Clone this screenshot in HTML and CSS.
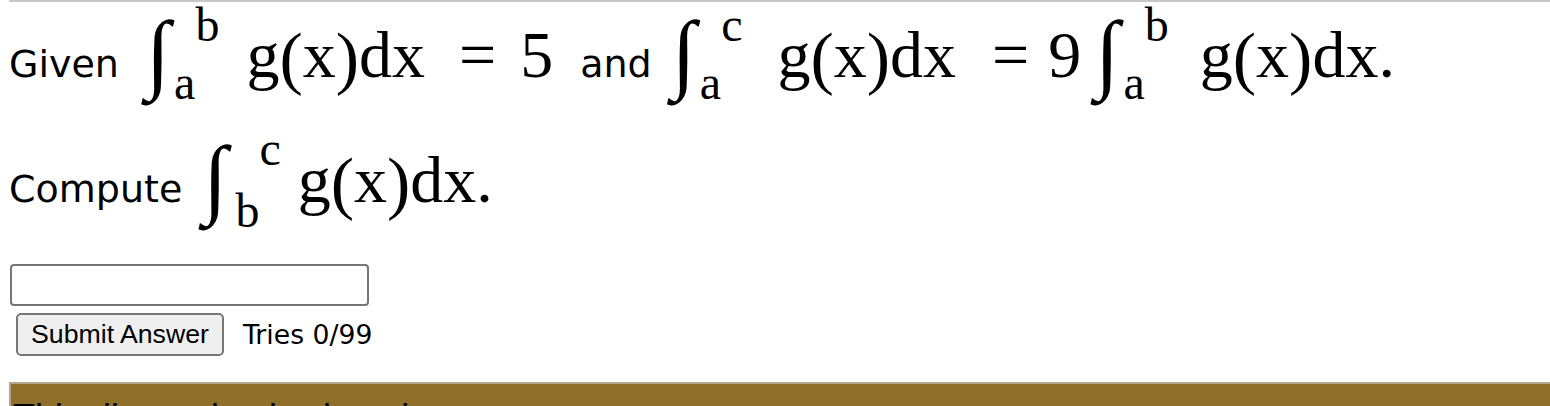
FILE: index.html
```html
<!DOCTYPE html>
<html>
<head>
<meta charset="utf-8">
<link rel="stylesheet" href="styles.css">
</head>
<body>
<div class="rule"></div>
<div class="line l1"><span class="t">Given</span><span class="int i1">∫</span><span class="lo">a</span><span class="hi">b</span><span class="m e1">g<span class="p">(</span>x<span class="p">)</span>dx</span><span class="m eq1">=</span><span class="m n5">5</span><span class="t and">and</span><span class="int i2">∫</span><span class="lo">a</span><span class="hi">c</span><span class="m e2">g<span class="p">(</span>x<span class="p">)</span>dx</span><span class="m eq2">=</span><span class="m n9">9</span><span class="int i3">∫</span><span class="lo">a</span><span class="hi">b</span><span class="m e3">g<span class="p">(</span>x<span class="p">)</span>dx.</span></div>
<div class="line l2"><span class="t">Compute</span><span class="int i4">∫</span><span class="lo lo2">b</span><span class="hi hi2">c</span><span class="m e4">g<span class="p">(</span>x<span class="p">)</span>dx.</span></div>
<div class="answer">
  <input class="field" type="text">
  <div class="submit-row"><button class="submit" type="button">Submit Answer</button><span class="tries">Tries 0/99</span></div>
</div>
<div class="closed">This discussion is closed.</div>
</body>
</html>
```
FILE: styles.css
```css
html, body { margin: 0; padding: 0; background: #fff; }
body { padding-left: 9px; overflow: hidden; height: 406px; }
.rule { height: 2px; background: #c8c8c8; }
.line {
  height: 110px;
  line-height: 110px;
  font-family: "DejaVu Sans", Verdana, sans-serif;
  font-size: 38px;
  white-space: nowrap;
  color: #000;
}
.line span { line-height: 0; }
.l1 { margin-top: 7px; }
.l2 { margin-top: 15px; }
.m { font-family: "Liberation Serif", "Times New Roman", serif; font-size: 66px; }
.m .p { font-size: 70px; vertical-align: -4px; }
.int { font-family: "Liberation Serif", "Times New Roman", serif; font-size: 88px; vertical-align: -5px; }
.lo, .hi { font-family: "Liberation Serif", "Times New Roman", serif; font-size: 48px; }
.lo { vertical-align: -22px; margin-left: 4px; }
.lo2 { vertical-align: -25px; margin-left: 8px; }
.hi { vertical-align: 36px; }
.hi2 { vertical-align: 37px; }
.i1 { margin-left: 27px; }
.i2 { margin-left: 20px; }
.i3 { margin-left: 14px; }
.i4 { margin-left: 21px; }
.e1 { margin-left: 27px; }
.e2 { margin-left: 35px; }
.e3 { margin-left: 31px; }
.e4 { margin-left: 17px; }
.eq1 { margin-left: 34px; }
.eq2 { margin-left: 36px; }
.n5 { margin-left: 24px; }
.n9 { margin-left: 19px; }
.and { margin-left: 27px; }
.answer { margin-top: 20px; }
.field {
  display: block;
  box-sizing: border-box;
  width: 359px;
  height: 42px;
  margin: 0 0 0 1px;
  border: 2px solid #767676;
  border-radius: 4px;
  background: #fff;
}
.submit-row { display: flex; align-items: center; margin-top: 7px; }
.submit {
  box-sizing: border-box;
  width: 208px;
  height: 43px;
  margin-left: 7px;
  padding: 0;
  border: 2px solid #767676;
  border-radius: 5px;
  background: #efefef;
  font-family: "Liberation Sans", Arial, sans-serif;
  font-size: 26.67px;
  color: #000;
}
.tries {
  margin-left: 19px;
  font-family: "DejaVu Sans", Verdana, sans-serif;
  font-size: 26.67px;
  color: #000;
}
.closed {
  margin-top: 26px;
  border-top: 2px solid #b3a58d;
  border-left: 2px solid #b3a58d;
  background: #8f6f2a;
  padding: 14px 0 0 2px;
  font-family: "Liberation Sans", Arial, sans-serif;
  font-size: 36px;
  line-height: 40px;
  color: #000;
  height: 60px;
}
```
